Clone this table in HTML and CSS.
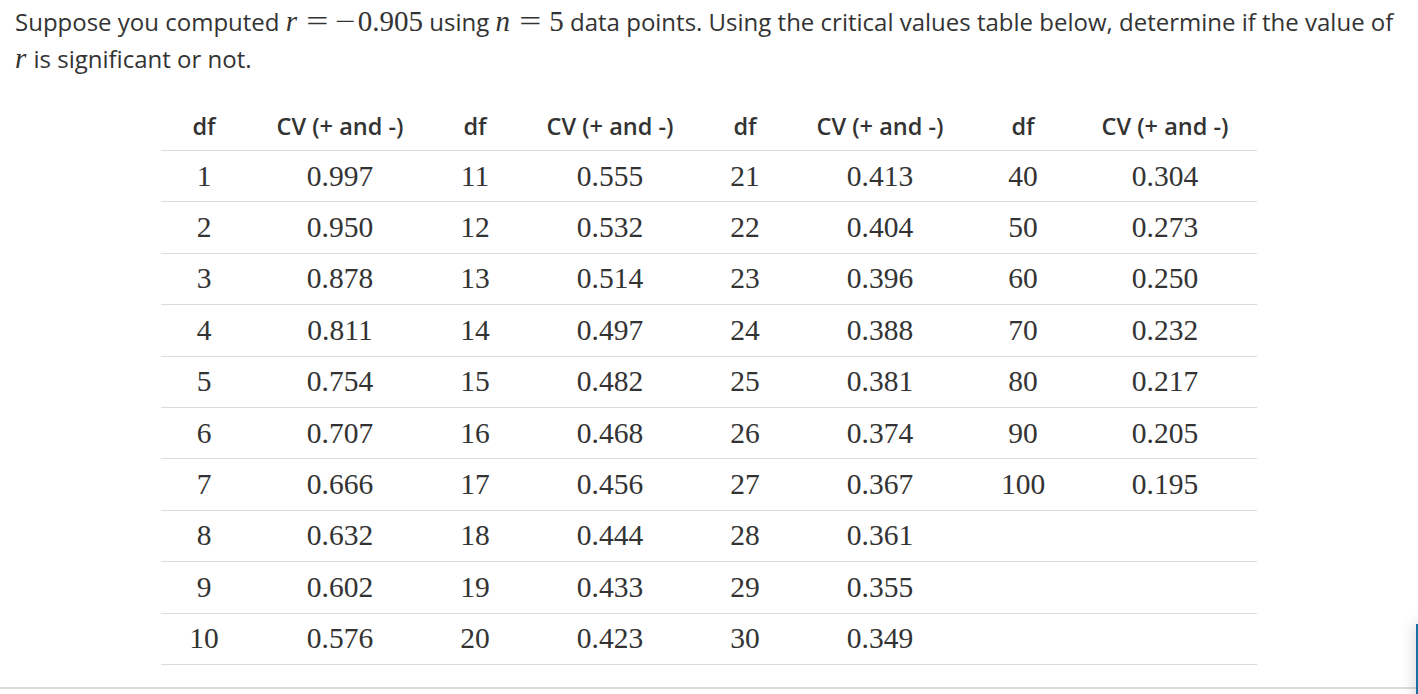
FILE: index.html
```html
<!DOCTYPE html>
<html>
<head>
<meta charset="utf-8">
<link rel="stylesheet" href="styles.css">
</head>
<body>
<div class="page">
  <p class="question">Suppose you computed <span class="math"><i>r</i><span class="op">=</span><span class="minus">−</span>0.905</span> using <span class="math"><i>n</i><span class="op">=</span>5</span> data points. Using the critical values table below, determine if the value of <span class="math"><i>r</i></span> is significant or not.</p>
  <table class="cv-table">
    <colgroup>
      <col class="c-df"><col class="c-cv"><col class="c-df2"><col class="c-cv"><col class="c-df2"><col class="c-cv"><col class="c-df4"><col class="c-cv4">
    </colgroup>
    <thead>
      <tr><th>df</th><th>CV (+ and -)</th><th>df</th><th>CV (+ and -)</th><th>df</th><th>CV (+ and -)</th><th>df</th><th>CV (+ and -)</th></tr>
    </thead>
    <tbody>
      <tr><td>1</td><td>0.997</td><td>11</td><td>0.555</td><td>21</td><td>0.413</td><td>40</td><td>0.304</td></tr>
      <tr><td>2</td><td>0.950</td><td>12</td><td>0.532</td><td>22</td><td>0.404</td><td>50</td><td>0.273</td></tr>
      <tr><td>3</td><td>0.878</td><td>13</td><td>0.514</td><td>23</td><td>0.396</td><td>60</td><td>0.250</td></tr>
      <tr><td>4</td><td>0.811</td><td>14</td><td>0.497</td><td>24</td><td>0.388</td><td>70</td><td>0.232</td></tr>
      <tr><td>5</td><td>0.754</td><td>15</td><td>0.482</td><td>25</td><td>0.381</td><td>80</td><td>0.217</td></tr>
      <tr><td>6</td><td>0.707</td><td>16</td><td>0.468</td><td>26</td><td>0.374</td><td>90</td><td>0.205</td></tr>
      <tr><td>7</td><td>0.666</td><td>17</td><td>0.456</td><td>27</td><td>0.367</td><td>100</td><td>0.195</td></tr>
      <tr><td>8</td><td>0.632</td><td>18</td><td>0.444</td><td>28</td><td>0.361</td><td></td><td></td></tr>
      <tr><td>9</td><td>0.602</td><td>19</td><td>0.433</td><td>29</td><td>0.355</td><td></td><td></td></tr>
      <tr><td>10</td><td>0.576</td><td>20</td><td>0.423</td><td>30</td><td>0.349</td><td></td><td></td></tr>
    </tbody>
  </table>
  <div class="divider"></div>
</div>
<div class="side-panel"></div>
</body>
</html>
```
FILE: styles.css
```css
html, body {
  margin: 0;
  padding: 0;
  background: #fff;
  overflow: hidden;
}
body {
  width: 1418px;
  height: 694px;
  font-family: "Open Sans", "Liberation Sans", sans-serif;
  color: #333;
  position: relative;
}
.page {
  display: flex;
  flex-direction: column;
}
.question {
  margin: 3px 8px 0 15px;
  font-size: 24px;
  line-height: 37px;
}
.math {
  font-family: "Liberation Serif", "DejaVu Serif", serif;
  font-size: 29px;
  line-height: 1;
  white-space: nowrap;
}
.math i {
  font-style: italic;
  margin-right: 1px;
}
.op {
  display: inline-block;
  transform: scaleX(1.35);
  margin: 0 11px;
}
.minus {
  display: inline-block;
  transform: scaleX(1.25);
  margin: 0 4px 0 1px;
}
.cv-table {
  margin: 24px auto 0;
  width: 1096px;
  border-collapse: collapse;
  table-layout: fixed;
}
.c-df { width: 86px; }
.c-cv { width: 186px; }
.c-df2 { width: 84px; }
.c-df4 { width: 100px; }
.c-cv4 { width: 184px; }
.cv-table th {
  font-weight: 600;
  font-size: 23.5px;
  height: 49px;
  padding: 0;
  text-align: center;
  border-bottom: 1px solid #dcdcdc;
}
.cv-table td {
  font-family: "Liberation Serif", "DejaVu Serif", serif;
  font-size: 29.5px;
  height: 50.4px;
  padding: 0;
  text-align: center;
  border-bottom: 1px solid #dcdcdc;
}
.divider {
  margin-top: 22px;
  height: 2px;
  background: #dcdcdc;
}
.side-panel {
  position: absolute;
  left: 1416px;
  top: 624px;
  width: 20px;
  height: 100px;
  border-left: 2px solid #1a6fa0;
  background: #fff;
  box-shadow: 0 0 16px rgba(0, 0, 0, 0.18);
}
```
